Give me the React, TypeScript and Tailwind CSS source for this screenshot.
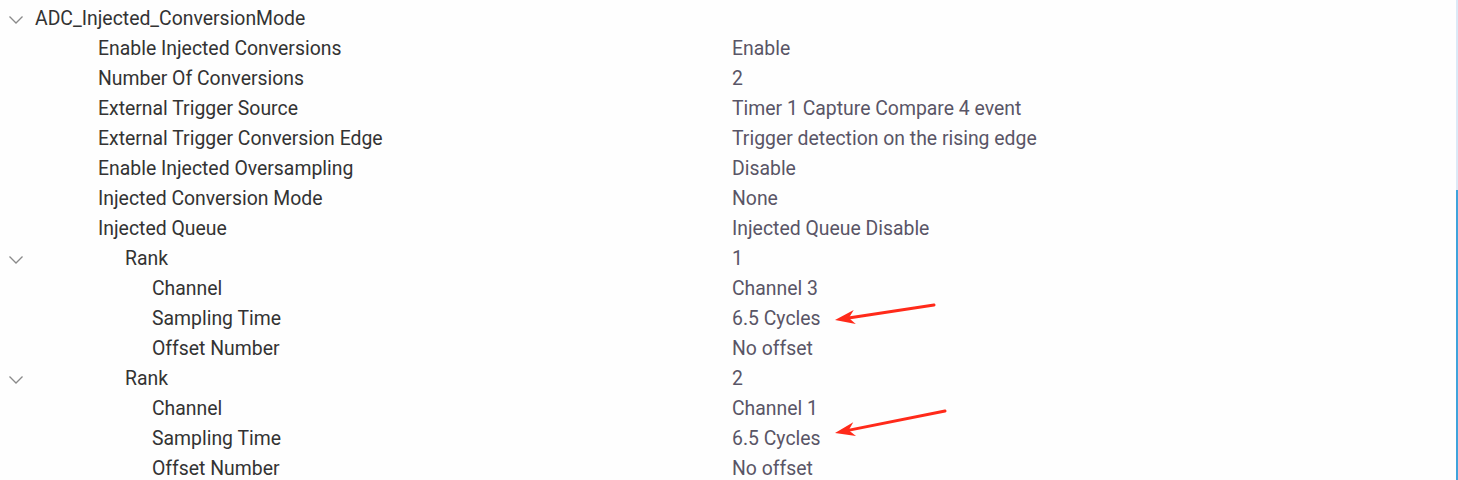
import React from "react";

type Row = {
    label: string;
    value?: string;
    level: number;
    chevron?: boolean;
};

const rows: Row[] = [
    { label: "ADC_Injected_ConversionMode", level: 0, chevron: true },
    { label: "Enable Injected Conversions", value: "Enable", level: 1 },
    { label: "Number Of Conversions", value: "2", level: 1 },
    { label: "External Trigger Source", value: "Timer 1 Capture Compare 4 event", level: 1 },
    { label: "External Trigger Conversion Edge", value: "Trigger detection on the rising edge", level: 1 },
    { label: "Enable Injected Oversampling", value: "Disable", level: 1 },
    { label: "Injected Conversion Mode", value: "None", level: 1 },
    { label: "Injected Queue", value: "Injected Queue Disable", level: 1 },
    { label: "Rank", value: "1", level: 2, chevron: true },
    { label: "Channel", value: "Channel 3", level: 3 },
    { label: "Sampling Time", value: "6.5 Cycles", level: 3 },
    { label: "Offset Number", value: "No offset", level: 3 },
    { label: "Rank", value: "2", level: 2, chevron: true },
    { label: "Channel", value: "Channel 1", level: 3 },
    { label: "Sampling Time", value: "6.5 Cycles", level: 3 },
    { label: "Offset Number", value: "No offset", level: 3 },
];

const indent = ["pl-[35px]", "pl-[98px]", "pl-[125px]", "pl-[152px]"];

function Chevron() {
    return (
        <svg width="16" height="10" viewBox="0 0 16 10" className="absolute left-[8px] top-[11px]">
            <path d="M1.5 1.5 L8 8 L14.5 1.5" fill="none" stroke="#8a8a8a" strokeWidth="1.3" />
        </svg>
    );
}

function Arrow({ x1, y1, x2, y2 }: { x1: number; y1: number; x2: number; y2: number }) {
    const dx = x1 - x2;
    const dy = y1 - y2;
    const len = Math.sqrt(dx * dx + dy * dy);
    const ux = dx / len;
    const uy = dy / len;
    const hl = 20;
    const hw = 7;
    const bx = x2 + ux * hl;
    const by = y2 + uy * hl;
    const px = -uy;
    const py = ux;
    return (
        <g>
            <line x1={x1} y1={y1} x2={x2 + ux * 12} y2={y2 + uy * 12} stroke="#ff2a1a" strokeWidth="3" strokeLinecap="round" />
            <polygon
                points={`${x2},${y2} ${bx + px * hw},${by + py * hw} ${x2 + ux * 14},${y2 + uy * 14} ${bx - px * hw},${by - py * hw}`}
                fill="#ff2a1a"
            />
        </g>
    );
}

export default function App() {
    return (
        <div className="relative w-[1458px] h-[480px] overflow-hidden bg-[#fefefe] font-['Roboto',sans-serif]">
            <div className="flex flex-col pt-[4px]">
                {rows.map((row, index) => (
                    <div key={index} className="relative flex h-[30px] items-center text-[19.4px] leading-none">
                        {row.chevron && <Chevron />}
                        <div className={`w-[732px] shrink-0 text-[#333333] ${indent[row.level]}`}>
                            {row.label}
                        </div>
                        <div className="text-[#595566]">{row.value}</div>
                    </div>
                ))}
            </div>
            <svg className="absolute left-0 top-0 pointer-events-none" width="1458" height="480">
                <Arrow x1={934} y1={305} x2={835} y2={320} />
                <Arrow x1={945} y1={411} x2={835} y2={433} />
            </svg>
            <div className="absolute right-0 top-0 flex h-full w-[2px] flex-col">
                <div className="h-[190px] bg-[#dce9f6]" />
                <div className="flex-1 bg-[#3fa3dc]" />
            </div>
        </div>
    );
}
